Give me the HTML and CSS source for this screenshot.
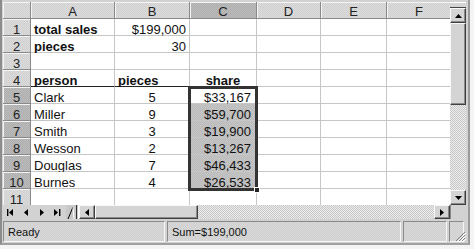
FILE: index.html
```html
<!DOCTYPE html>
<html>
<head>
<meta charset="utf-8">
<link rel="stylesheet" href="styles.css">
</head>
<body>
<div class="win">
  <div class="main">
    <div class="sheet">
      <div class="grid">
        <div class="c hd corner"></div>
        <div class="c hd">A</div>
        <div class="c hd">B</div>
        <div class="c hd sel">C</div>
        <div class="c hd">D</div>
        <div class="c hd">E</div>
        <div class="c hd">F</div>

        <div class="c rh">1</div>
        <div class="c b">total sales</div>
        <div class="c r">$199,000</div>
        <div class="c"></div><div class="c"></div><div class="c"></div><div class="c"></div>

        <div class="c rh">2</div>
        <div class="c b">pieces</div>
        <div class="c r">30</div>
        <div class="c"></div><div class="c"></div><div class="c"></div><div class="c"></div>

        <div class="c rh">3</div>
        <div class="c"></div><div class="c"></div><div class="c"></div><div class="c"></div><div class="c"></div><div class="c"></div>

        <div class="c rh">4</div>
        <div class="c b bb">person</div>
        <div class="c b bb">pieces</div>
        <div class="c b ctr">share</div>
        <div class="c"></div><div class="c"></div><div class="c"></div>

        <div class="c rh sel">5</div>
        <div class="c">Clark</div>
        <div class="c ctr">5</div>
        <div class="c r cc">$33,167</div>
        <div class="c"></div><div class="c"></div><div class="c"></div>

        <div class="c rh sel">6</div>
        <div class="c">Miller</div>
        <div class="c ctr">9</div>
        <div class="c r cc hi">$59,700</div>
        <div class="c"></div><div class="c"></div><div class="c"></div>

        <div class="c rh sel">7</div>
        <div class="c">Smith</div>
        <div class="c ctr">3</div>
        <div class="c r cc hi">$19,900</div>
        <div class="c"></div><div class="c"></div><div class="c"></div>

        <div class="c rh sel">8</div>
        <div class="c">Wesson</div>
        <div class="c ctr">2</div>
        <div class="c r cc hi">$13,267</div>
        <div class="c"></div><div class="c"></div><div class="c"></div>

        <div class="c rh sel">9</div>
        <div class="c">Douglas</div>
        <div class="c ctr">7</div>
        <div class="c r cc hi">$46,433</div>
        <div class="c"></div><div class="c"></div><div class="c"></div>

        <div class="c rh sel">10</div>
        <div class="c">Burnes</div>
        <div class="c ctr">4</div>
        <div class="c r cc hi">$26,533</div>
        <div class="c"></div><div class="c"></div><div class="c"></div>

        <div class="c rh">11</div>
        <div class="c"></div><div class="c"></div><div class="c"></div><div class="c"></div><div class="c"></div><div class="c"></div>
      </div>
      <div class="selbox"><span class="handle"></span></div>
    </div>
    <div class="vscroll">
      <div class="splitv"></div>
      <div class="btn"><svg width="7" height="4" viewBox="0 0 7 4"><path d="M3.5 0 L7 4 L0 4 Z" fill="#000"/></svg></div>
      <div class="thumb vthumb"></div>
      <div class="track"></div>
      <div class="btn"><svg width="7" height="4" viewBox="0 0 7 4"><path d="M0 0 L7 0 L3.5 4 Z" fill="#000"/></svg></div>
    </div>
  </div>
  <div class="hbar">
    <div class="nav">
      <div class="navb"><svg width="8" height="7" viewBox="0 0 8 7"><rect x="0" y="0" width="1.4" height="7" fill="#000"/><path d="M2 3.5 L6 0 L6 7 Z" fill="#000"/></svg></div>
      <div class="navb"><svg width="5" height="7" viewBox="0 0 5 7"><path d="M0 3.5 L4 0 L4 7 Z" fill="#000"/></svg></div>
      <div class="navb"><svg width="5" height="7" viewBox="0 0 5 7"><path d="M0 0 L4 3.5 L0 7 Z" fill="#000"/></svg></div>
      <div class="navb"><svg width="8" height="7" viewBox="0 0 8 7"><path d="M0 0 L4 3.5 L0 7 Z" fill="#000"/><rect x="5" y="0" width="1.4" height="7" fill="#000"/></svg></div>
    </div>
    <div class="tabs"><svg width="8" height="12" viewBox="0 0 8 12"><path d="M1 12 L6 0" stroke="#000" stroke-width="1"/><path d="M6 0 L7 12" stroke="#fff" stroke-width="1"/></svg></div>
    <div class="tsplit"></div>
    <div class="hscroll">
      <div class="btn hb"><svg width="4" height="7" viewBox="0 0 4 7"><path d="M0 3.5 L4 0 L4 7 Z" fill="#000"/></svg></div>
      <div class="thumb hthumb"></div>
      <div class="track"></div>
      <div class="btn hb"><svg width="4" height="7" viewBox="0 0 4 7"><path d="M0 0 L4 3.5 L0 7 Z" fill="#000"/></svg></div>
    </div>
    <div class="cornerbox"></div>
  </div>
  <div class="status">
    <div class="panel p1">Ready</div>
    <div class="panel p2">Sum=$199,000</div>
    <div class="panel p3"></div>
    <div class="panel p4"></div>
    <div class="grip"><svg width="12" height="12" viewBox="0 0 12 12"><path d="M11 2 L2 11 M11 5 L5 11 M11 8 L8 11" stroke="#808080" stroke-width="1"/><path d="M12 3 L3 12 M12 6 L6 12 M12 9 L9 12" stroke="#fff" stroke-width="1"/></svg></div>
  </div>
</div>
</body>
</html>
```
FILE: styles.css
```css
* { box-sizing: border-box; }
html, body { margin: 0; padding: 0; background: #f4f4f4; }
body {
  font-family: "Liberation Sans", Arial, sans-serif;
  color: #111;
}
.win {
  width: 470px;
  height: 245px;
  background: #d2d2d2;
  padding: 2px 2px 0 1px;
  border-left: 2px solid #8c8c8c;
  border-right: 2px solid #9a9a9a;
  border-bottom: 2px solid #a0a0a0;
  display: flex;
  flex-direction: column;
}
.main {
  display: flex;
  height: 203px;
}
.sheet {
  position: relative;
  width: 449px;
  height: 203px;
  overflow: hidden;
  background: #fff;
}
.grid {
  display: grid;
  grid-template-columns: 28px 84px 75px 67px 64px 66px 65px;
  grid-auto-rows: 17px;
}
.c {
  height: 17px;
  border-right: 1px solid #c6c6c6;
  border-bottom: 1px solid #c6c6c6;
  font-size: 13px;
  line-height: 21px;
  padding: 0 3px;
  white-space: nowrap;
  background: #fff;
}
.hd, .rh {
  background-color: #d6d6d6;
  background-image: repeating-conic-gradient(#d0d0d0 0 25%, #dcdcdc 0 50%);
  background-size: 2px 2px;
  border-right: 1px solid #8a8a8a;
  border-bottom: 1px solid #8a8a8a;
  box-shadow: inset 1px 1px 0 #f4f4f4;
  text-align: center;
  color: #222;
  padding: 0;
}
.hd { line-height: 20px; }
.hd.sel, .rh.sel {
  background-color: #b4b4b4;
  background-image: repeating-conic-gradient(#aeaeae 0 25%, #bcbcbc 0 50%);
}
.b { font-weight: bold; }
.r { text-align: right; padding-right: 3px; }
.ctr { text-align: center; }
.cc { padding-right: 5px; }
.hi {
  background-color: #c0c0c0;
  background-image: repeating-conic-gradient(#bababa 0 25%, #c6c6c6 0 50%);
  background-size: 2px 2px;
}
.bb { border-bottom: 1px solid #222; }
.selbox {
  position: absolute;
  left: 185px;
  top: 84px;
  width: 70px;
  height: 105px;
  border: 3px solid #333;
  pointer-events: none;
}
.handle {
  position: absolute;
  right: -5px;
  bottom: -5px;
  width: 6px;
  height: 6px;
  background: #222;
  border: 1px solid #fff;
}
.vscroll {
  width: 16px;
  display: flex;
  flex-direction: column;
  background: #d2d2d2;
}
.splitv {
  height: 6px;
  border-top: 1px solid #fff;
  border-bottom: 1px solid #444;
  background: #d4d4d4;
}
.btn {
  background: #d4d4d4;
  border-top: 1px solid #f8f8f8;
  border-left: 1px solid #f8f8f8;
  border-right: 1px solid #404040;
  border-bottom: 1px solid #404040;
  box-shadow: inset -1px -1px 0 #8a8a8a;
  display: flex;
  align-items: center;
  justify-content: center;
}
.vscroll .btn { height: 15px; }
.thumb {
  background: #d4d4d4;
  border-top: 1px solid #f8f8f8;
  border-left: 1px solid #f8f8f8;
  border-right: 1px solid #404040;
  border-bottom: 1px solid #404040;
  box-shadow: inset -1px -1px 0 #8a8a8a;
}
.vthumb { height: 82px; }
.track {
  flex: 1;
  background-color: #e0e0e0;
  background-image: repeating-conic-gradient(#c8c8c8 0 25%, #ececec 0 50%);
  background-size: 2px 2px;
}
.hbar {
  display: flex;
  height: 14px;
  background: #d2d2d2;
}
.nav {
  display: flex;
  width: 63px;
  align-items: center;
}
.navb {
  width: 16px;
  height: 14px;
  display: flex;
  align-items: center;
  justify-content: center;
}
.tabs {
  width: 10px;
  display: flex;
  align-items: flex-end;
  justify-content: center;
  background: #c8c8c8;
}
.tsplit {
  width: 3px;
  border-left: 1px solid #333;
  border-right: 1px solid #fff;
  background: #c8c8c8;
}
.hscroll {
  display: flex;
  flex: 1;
}
.hb { width: 16px; height: 14px; }
.hthumb { width: 103px; }
.cornerbox {
  width: 16px;
  background: #d2d2d2;
  border-left: 1px solid #888;
}
.status {
  margin-top: 2px;
  height: 22px;
  display: flex;
  gap: 2px;
  align-items: stretch;
  padding-bottom: 1px;
}
.panel {
  border-top: 1px solid #8a8a8a;
  border-left: 1px solid #8a8a8a;
  border-right: 1px solid #f6f6f6;
  border-bottom: 1px solid #f6f6f6;
  font-size: 11px;
  line-height: 20px;
  padding-left: 4px;
  color: #111;
  background-color: #d4d4d4;
  background-image: repeating-conic-gradient(#cecece 0 25%, #dadada 0 50%);
  background-size: 2px 2px;
}
.p1 { width: 162px; }
.p2 { width: 234px; padding-left: 4px; }
.p3 { width: 44px; }
.p4 { flex: 1; }
.grip {
  width: 12px;
  display: flex;
  align-items: flex-end;
  margin-left: -12px;
}
```
